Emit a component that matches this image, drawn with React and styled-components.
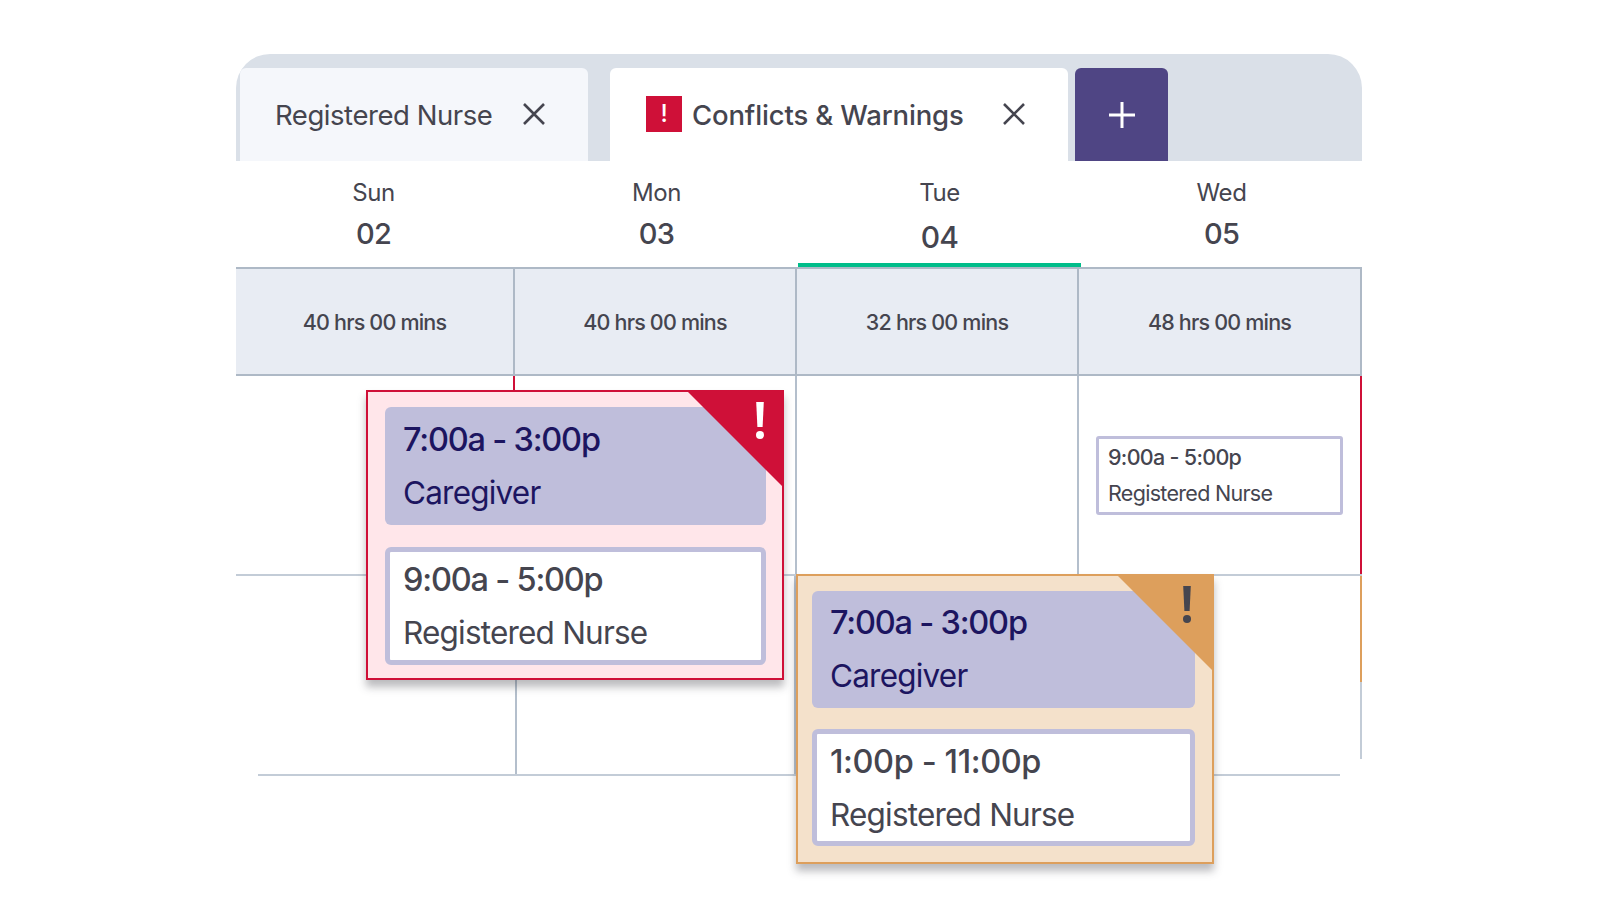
import React from "react";
import styled, { createGlobalStyle } from "styled-components";

const GlobalStyle = createGlobalStyle`
  html, body {
    margin: 0;
    background: #ffffff;
  }
  body {
    font-family: Inter, "Noto Sans", sans-serif;
    color: #45454f;
  }
`;

const Page = styled.div`
  width: 1600px;
  height: 900px;
  padding: 54px 0 0 236px;
  box-sizing: border-box;
  overflow: hidden;
`;

const Panel = styled.div`
  width: 1126px;
`;

const TabBar = styled.div`
  display: flex;
  height: 107px;
  box-sizing: border-box;
  padding: 14px 0 0 4px;
  background: #dae0e8;
  border-radius: 34px 34px 0 0;
`;

const Tab = styled.div`
  display: flex;
  align-items: center;
  box-sizing: border-box;
  width: ${(p) => p.$width}px;
  margin-right: ${(p) => p.$gap}px;
  padding: 0 42px 2px ${(p) => p.$pad}px;
  background: ${(p) => (p.$active ? "#ffffff" : "#f5f7fb")};
  border-radius: 6px 6px 0 0;
  font-size: 27.5px;
  font-weight: ${(p) => (p.$active ? 550 : 400)};
  letter-spacing: ${(p) => (p.$active ? "-0.15px" : "-0.45px")};
`;

const TabLabel = styled.span`
  flex: 1;
  padding-top: 2px;
`;

const TabAlert = styled.span`
  width: 36px;
  height: 36px;
  margin-right: 10px;
  background: #cf1038;
  color: #ffffff;
  font-size: 24px;
  font-weight: 500;
  line-height: 36px;
  text-align: center;
`;

const AddTab = styled.div`
  display: flex;
  align-items: center;
  justify-content: center;
  width: 93px;
  background: #4f4584;
  border-radius: 6px 6px 0 0;
`;

const Days = styled.div`
  display: grid;
  grid-template-columns: 279px 283px 283px 281px;
  height: 106px;
`;

const Day = styled.div`
  display: flex;
  flex-direction: column;
  align-items: center;
  padding-top: 17px;
  box-sizing: border-box;
  border-bottom: ${(p) => (p.$today ? "4px solid #00bd8a" : "none")};

  &:first-child {
    padding-right: 4px;
  }
`;

const DayName = styled.div`
  font-size: 24px;
  line-height: 30px;
  letter-spacing: -0.4px;
`;

const DayNumber = styled.div`
  margin-top: ${(p) => (p.$today ? 12 : 9)}px;
  font-size: ${(p) => (p.$today ? 30 : 29)}px;
  line-height: 34px;
  font-weight: 550;
  letter-spacing: -0.8px;
`;

const Totals = styled.div`
  display: grid;
  grid-template-columns: 279px 282px 282px 283px;
  height: 109px;
  box-sizing: border-box;
  background: #e8ecf3;
  border-top: 2px solid #aeb9c6;
  border-bottom: 2px solid #aeb9c6;
`;

const Total = styled.div`
  display: flex;
  align-items: center;
  justify-content: center;
  box-sizing: border-box;
  border-right: 2px solid #aeb9c6;
  padding-top: 1px;
  font-size: 21.5px;
  font-weight: 550;
  letter-spacing: -0.8px;
`;

const Body = styled.div`
  position: relative;
`;

const Row = styled.div`
  display: grid;
  grid-template-columns: ${(p) => p.$columns};
  height: ${(p) => p.$height}px;
  box-sizing: border-box;
  border-bottom: ${(p) => (p.$ruled ? "2px solid #c3ccd7" : "none")};
`;

const Cell = styled.div`
  display: flex;
  align-items: center;
  justify-content: center;
  box-sizing: border-box;
  border-right: 2px solid ${(p) => p.$line || "#b4bfcc"};
`;

const ClosingCell = styled.div`
  position: relative;

  &::after {
    content: "";
    position: absolute;
    right: 0;
    top: 0;
    width: 2px;
    height: 183px;
    background: linear-gradient(#dd9f5c 106px, #c3ccd7 106px);
  }
`;

const BottomRule = styled.div`
  height: 2px;
  margin: 0 22px 0 22px;
  background: #c3ccd7;
`;

const MiniShift = styled.div`
  width: 247px;
  height: 79px;
  box-sizing: border-box;
  padding: 1px 0 0 9px;
  background: #ffffff;
  border: 3px solid #bfbedb;
  border-radius: 3px;
`;

const MiniTime = styled.div`
  font-size: 21.5px;
  line-height: 35px;
  font-weight: 550;
  letter-spacing: -0.7px;
`;

const MiniRole = styled.div`
  font-size: 21.5px;
  line-height: 36px;
  letter-spacing: -0.7px;
`;

const ConflictCard = styled.div`
  position: absolute;
  left: ${(p) => p.$left}px;
  top: ${(p) => p.$top}px;
  width: 418px;
  height: 290px;
  box-sizing: border-box;
  padding: 15px ${(p) => p.$padRight}px 0 ${(p) => p.$padLeft}px;
  background: ${(p) => p.$bg};
  border: 2px solid ${(p) => p.$accent};
  box-shadow: 0 7px 8px rgba(60, 60, 70, 0.35);
`;

const Corner = styled.svg`
  position: absolute;
  right: -2px;
  top: -2px;
`;

const Shift = styled.div`
  height: ${(p) => p.$height}px;
  box-sizing: border-box;
  margin-bottom: ${(p) => p.$gap}px;
  padding: ${(p) => (p.$outlined ? "3px 0 0 13px" : `${8 - p.$lift}px 0 0 18px`)};
  border-radius: 6px;
  background: ${(p) => (p.$outlined ? "#ffffff" : "#bfbedb")};
  border: ${(p) => (p.$outlined ? "5px solid #bfbedb" : "none")};
  color: ${(p) => (p.$outlined ? "#45454f" : "#1c1560")};
`;

const ShiftTime = styled.div`
  font-size: 32.5px;
  line-height: 50px;
  font-weight: 550;
  letter-spacing: ${(p) => p.$spacing || "-1.2px"};
`;

const ShiftRole = styled.div`
  margin-top: 3px;
  font-size: 31.5px;
  line-height: 50px;
  letter-spacing: -0.8px;
`;

const CloseIcon = () => (
  <svg width="24" height="24" viewBox="0 0 24 24" fill="none" stroke="#45454f" strokeWidth="2.6">
    <path d="M2 2 22 22M22 2 2 22" />
  </svg>
);

const PlusIcon = () => (
  <svg width="26" height="26" viewBox="0 0 26 26" fill="none" stroke="#ffffff" strokeWidth="3">
    <path d="M13 0V26M0 13H26" />
  </svg>
);

const CornerFlag = ({ color, mark, markX }) => (
  <Corner width="98" height="98" viewBox="0 0 98 98">
    <polygon points="0,0 98,0 98,98" fill={color} />
    <path d={`M${markX - 3.8} 12H${markX + 3.8}L${markX + 2.6} 37H${markX - 2.6}Z`} fill={mark} />
    <circle cx={markX} cy="45" r="4" fill={mark} />
  </Corner>
);

const days = [
  { name: "Sun", number: "02", total: "40 hrs 00 mins" },
  { name: "Mon", number: "03", total: "40 hrs 00 mins" },
  { name: "Tue", number: "04", total: "32 hrs 00 mins", today: true },
  { name: "Wed", number: "05", total: "48 hrs 00 mins" },
];

const cards = [
  {
    left: 130,
    top: 14,
    bg: "#ffe6ea",
    accent: "#cf1038",
    mark: "#ffffff",
    markX: 74,
    padLeft: 17,
    padRight: 16,
    height: 118,
    gap: 22,
    lift: 0,
    time: "9:00a - 5:00p",
  },
  {
    left: 560,
    top: 198,
    bg: "#f4e1cb",
    accent: "#dd9f5c",
    mark: "#45454f",
    markX: 71,
    padLeft: 14,
    padRight: 17,
    height: 117,
    gap: 21,
    lift: 1,
    time: "1:00p - 11:00p",
    spacing: "-0.4px",
  },
];

export default function App() {
  return (
    <Page>
      <GlobalStyle />
      <Panel>
        <TabBar>
          <Tab $width={348} $gap={22} $pad={35}>
            <TabLabel>Registered Nurse</TabLabel>
            <CloseIcon />
          </Tab>
          <Tab $active $width={458} $gap={7} $pad={36}>
            <TabAlert>!</TabAlert>
            <TabLabel>Conflicts &amp; Warnings</TabLabel>
            <CloseIcon />
          </Tab>
          <AddTab>
            <PlusIcon />
          </AddTab>
        </TabBar>
        <Days>
          {days.map((day) => (
            <Day key={day.name} $today={day.today}>
              <DayName>{day.name}</DayName>
              <DayNumber $today={day.today}>{day.number}</DayNumber>
            </Day>
          ))}
        </Days>
        <Totals>
          {days.map((day) => (
            <Total key={day.name}>{day.total}</Total>
          ))}
        </Totals>
        <Body>
          <Row $columns="279px 282px 282px 283px" $height={200} $ruled>
            <Cell $line="#cf1038" />
            <Cell />
            <Cell />
            <Cell $line="#cf1038">
              <MiniShift>
                <MiniTime>9:00a - 5:00p</MiniTime>
                <MiniRole>Registered Nurse</MiniRole>
              </MiniShift>
            </Cell>
          </Row>
          <Row $columns="281px 279px 283px 283px" $height={198}>
            <Cell />
            <Cell />
            <Cell />
            <ClosingCell />
          </Row>
          <BottomRule />
          {cards.map((card) => (
            <ConflictCard
              key={card.time}
              $left={card.left}
              $top={card.top}
              $bg={card.bg}
              $accent={card.accent}
              $padLeft={card.padLeft}
              $padRight={card.padRight}
            >
              <CornerFlag color={card.accent} mark={card.mark} markX={card.markX} />
              <Shift $height={card.height} $gap={card.gap} $lift={card.lift}>
                <ShiftTime>7:00a - 3:00p</ShiftTime>
                <ShiftRole>Caregiver</ShiftRole>
              </Shift>
              <Shift $outlined $height={card.height} $gap={card.gap} $lift={card.lift}>
                <ShiftTime $spacing={card.spacing}>{card.time}</ShiftTime>
                <ShiftRole>Registered Nurse</ShiftRole>
              </Shift>
            </ConflictCard>
          ))}
        </Body>
      </Panel>
    </Page>
  );
}
